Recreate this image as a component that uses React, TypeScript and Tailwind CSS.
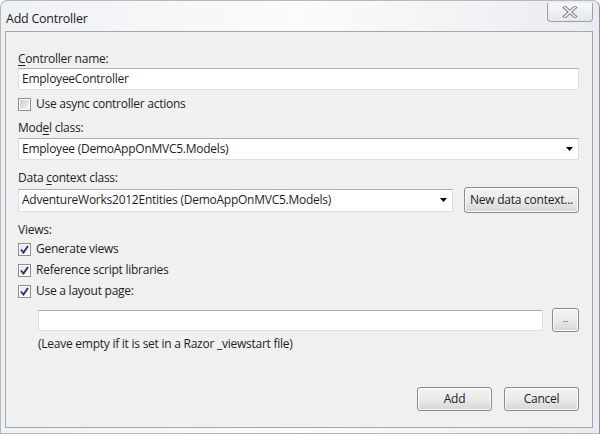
import React from "react"

const font = "font-['Open_Sans','Noto_Sans',sans-serif]"

function Check({ checked }: { checked?: boolean }) {
  return (
    <span className="w-[13px] h-[13px] shrink-0 border border-[#8f8f8f] bg-white p-px flex">
      <span
        className={
          "flex-1 flex items-center justify-center " +
          (checked
            ? "bg-gradient-to-br from-[#e4e6ea] to-[#fbfbfb]"
            : "bg-gradient-to-br from-[#c9ccd1] to-[#f5f5f5]")
        }
      >
        {checked && (
          <svg width="9" height="9" viewBox="0 0 9 9">
            <path d="M1 4.5 L3.5 7.5 L8 1" fill="none" stroke="#23307a" strokeWidth="1.9" />
          </svg>
        )}
      </span>
    </span>
  )
}

function CheckRow({ label, checked, className }: { label: string; checked?: boolean; className?: string }) {
  return (
    <div className={"flex items-center h-[16px] gap-[5px] " + (className ?? "")}>
      <Check checked={checked} />
      <span className="text-[#1e1e1e]">{label}</span>
    </div>
  )
}

function Arrow() {
  return (
    <svg width="7" height="4" viewBox="0 0 7 4" className="shrink-0">
      <path d="M0 0 H7 L3.5 4 Z" fill="#000" />
    </svg>
  )
}

function Field({ children, className }: { children?: React.ReactNode; className?: string }) {
  return (
    <div
      className={
        "flex items-center bg-white border border-[#dadfe5] border-t-[#abadb3] pl-[3px] pr-[5px] text-[#1e1e1e] " +
        (className ?? "")
      }
    >
      {children}
    </div>
  )
}

function Btn({ children, className }: { children: React.ReactNode; className?: string }) {
  return (
    <div
      className={
        "flex items-center justify-center rounded-[3px] border border-[#8a8a8a] bg-gradient-to-b from-[#f3f3f3] via-[#ebebeb] to-[#d6d6d6] text-[#1e1e1e] shadow-[inset_0_0_0_1px_#fbfbfb] " +
        (className ?? "")
      }
    >
      {children}
    </div>
  )
}

export default function App() {
  return (
    <div
      className={
        "w-[600px] h-[434px] flex flex-col rounded-tl-[7px] rounded-tr-[7px] border border-[#b4b9be] border-r-[#8d9298] bg-gradient-to-r from-[#eef1f4] via-[#fbfbfc] to-[#e9ecef] text-[12px] tracking-[-0.25px] " +
        font
      }
    >
      {/* Title bar */}
      <div className="h-[30px] flex items-start justify-between shrink-0">
        <span className="pl-[5px] pt-[10px] text-[12.5px] text-[#1c1c1c] leading-[16px]">Add Controller</span>
        <div className="mr-[6px] mt-[2px] w-[46px] h-[19px] rounded-b-[4px] border border-t-0 border-[#9ca1a8] bg-gradient-to-b from-[#f6f7f8] to-[#e4e7eb] flex items-center justify-center">
          <svg width="16" height="12" viewBox="0 0 16 12">
            <path d="M3 1.5 L13 10.5 M13 1.5 L3 10.5" stroke="#7d8288" strokeWidth="3.6" strokeLinecap="square" />
            <path d="M3 1.5 L13 10.5 M13 1.5 L3 10.5" stroke="#f4f5f6" strokeWidth="1.6" strokeLinecap="square" />
          </svg>
        </div>
      </div>

      {/* Client area */}
      <div className="flex-1 flex pl-[4px] pr-[6px] pb-[5px]">
        <div className="flex-1 flex flex-col border border-[#a3a7ab] bg-[#f0f0f0] pl-[12px] pr-[13px] pt-[19px] leading-[16px]">
          <div className="text-[#1e1e1e]">
            <span className="underline underline-offset-2">C</span>ontroller name:
          </div>
          <Field className="mt-[1px] h-[22px]">EmployeeController</Field>
          <CheckRow className="mt-[6px]" label="Use async controller actions" />

          <div className="mt-[8px] text-[#1e1e1e]">
            Mod<span className="underline underline-offset-2">e</span>l class:
          </div>
          <Field className="mt-[2px] h-[22px] justify-between">
            <span>Employee (DemoAppOnMVC5.Models)</span>
            <Arrow />
          </Field>

          <div className="mt-[10px] text-[#1e1e1e]">
            Data <span className="underline underline-offset-2">c</span>ontext class:
          </div>
          <div className="mt-[1px] flex items-center gap-[11px]">
            <Field className="flex-1 h-[23px] justify-between">
              <span>AdventureWorks2012Entities (DemoAppOnMVC5.Models)</span>
              <Arrow />
            </Field>
            <Btn className="w-[115px] h-[26px]">New data context...</Btn>
          </div>

          <div className="mt-[9px] text-[#1e1e1e]">Views:</div>
          <CheckRow className="mt-[3px]" label="Generate views" checked />
          <CheckRow className="mt-[5px]" label="Reference script libraries" checked />
          <CheckRow className="mt-[5px]" label="Use a layout page:" checked />

          <div className="mt-[9px] pl-[20px] flex items-center gap-[9px]">
            <Field className="flex-1 h-[21px]" />
            <Btn className="w-[27px] h-[24px] text-[8px] leading-none pb-[2px]">...</Btn>
          </div>
          <div className="mt-[4px] pl-[20px] text-[#1e1e1e]">
            (Leave empty if it is set in a Razor _viewstart file)
          </div>

          <div className="mt-[35px] flex justify-end gap-[12px]">
            <Btn className="w-[75px] h-[24px]">Add</Btn>
            <Btn className="w-[75px] h-[24px]">Cancel</Btn>
          </div>
        </div>
      </div>
    </div>
  )
}
